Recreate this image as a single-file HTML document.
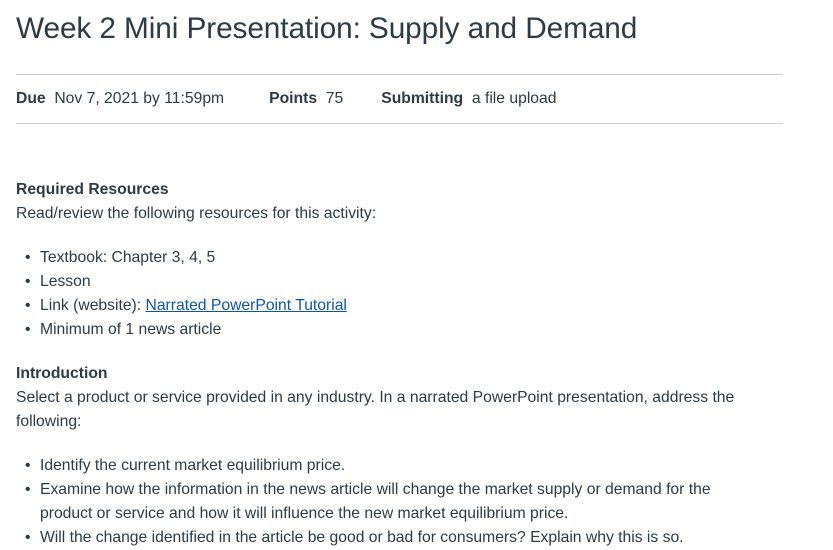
<!DOCTYPE html>
<html><head><style>
body{margin:0;background:#fff;font-family:"Liberation Sans",sans-serif;color:#2d3b45;width:833px;height:536px;overflow:hidden;position:relative}
.a{position:absolute;left:16px;white-space:nowrap}
h1{position:absolute;left:16px;top:9px;margin:0;font-weight:normal;font-size:29.8px;letter-spacing:-0.1px;line-height:40px}
.hr{position:absolute;left:16px;width:767px;height:1px;background:#c7cdd1}
.t{font-size:15.7px;line-height:24px}
b{font-weight:bold}
.li{position:absolute;left:40px;white-space:nowrap;font-size:15.7px;line-height:24px}
.li.d:before{content:"•";position:absolute;left:-15px}
a{color:#0b57b0;text-decoration:underline}
</style></head><body>
<h1>Week 2 Mini Presentation: Supply and Demand</h1>
<div class="hr" style="top:74px"></div>
<div class="a t" style="top:87px"><b>Due</b>&nbsp;&nbsp;Nov 7, 2021 by 11:59pm<span style="display:inline-block;width:45px"></span><b>Points</b>&nbsp;&nbsp;75<span style="display:inline-block;width:38px"></span><b>Submitting</b>&nbsp;&nbsp;a file upload</div>
<div class="hr" style="top:123px"></div>
<div class="a t" style="top:178px"><b>Required Resources</b></div>
<div class="a t" style="top:202px">Read/review the following resources for this activity:</div>
<div class="li d" style="top:246px">Textbook: Chapter 3, 4, 5</div>
<div class="li d" style="top:270px">Lesson</div>
<div class="li d" style="top:294px">Link (website): <a>Narrated PowerPoint Tutorial</a></div>
<div class="li d" style="top:318px">Minimum of 1 news article</div>
<div class="a t" style="top:362px"><b>Introduction</b></div>
<div class="a t" style="top:386px">Select a product or service provided in any industry. In a narrated PowerPoint presentation, address the</div>
<div class="a t" style="top:410px">following:</div>
<div class="li d" style="top:454px">Identify the current market equilibrium price.</div>
<div class="li d" style="top:478px">Examine how the information in the news article will change the market supply or demand for the</div>
<div class="li" style="top:502px">product or service and how it will influence the new market equilibrium price.</div>
<div class="li d" style="top:526px">Will the change identified in the article be good or bad for consumers? Explain why this is so.</div>
</body></html>
